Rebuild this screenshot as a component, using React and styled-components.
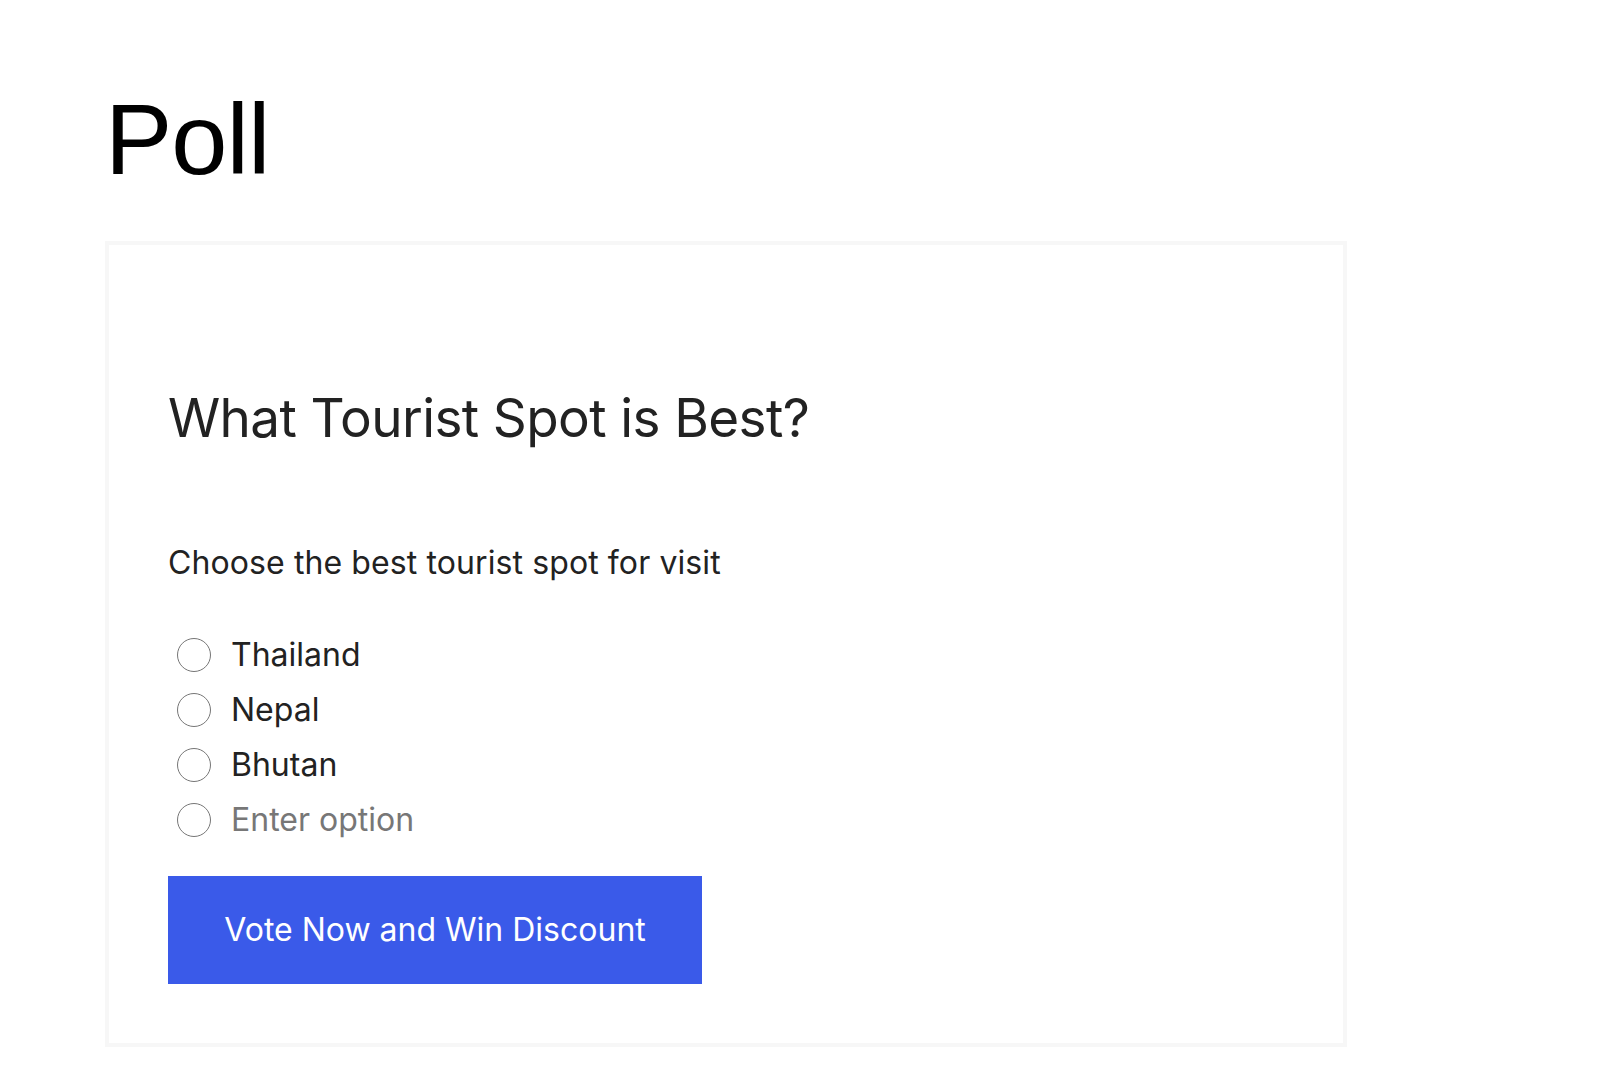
import React from 'react';
import styled, { createGlobalStyle } from 'styled-components';

const GlobalStyle = createGlobalStyle`
  html, body {
    margin: 0;
    padding: 0;
    background: #ffffff;
  }
`;

const Page = styled.div`
  padding: 89px 0 40px 105px;
  font-family: Inter, "Noto Sans", sans-serif;
  color: #222222;
`;

const PageTitle = styled.h1`
  margin: 0 0 51px 0;
  font-family: "Liberation Sans", Arial, sans-serif;
  font-weight: 400;
  font-size: 101px;
  line-height: 1;
  letter-spacing: -1px;
  color: #000000;
`;

const Card = styled.form`
  box-sizing: border-box;
  width: 1242px;
  height: 806px;
  border: 4px solid #f7f7f7;
  padding: 142px 60px 0 59px;
`;

const Question = styled.h2`
  margin: 0 0 93px 0;
  font-weight: 400;
  font-size: 53px;
  line-height: 1.2;
  letter-spacing: -0.6px;
  color: #222222;
`;

const Prompt = styled.p`
  margin: 0 0 55px 0;
  font-size: 32px;
  line-height: 1.2;
  letter-spacing: 0.1px;
  color: #222222;
`;

const Options = styled.div`
  display: flex;
  flex-direction: column;
  gap: 19px;
  margin-bottom: 38px;
`;

const Option = styled.label`
  display: flex;
  align-items: center;
  gap: 20px;
  padding-left: 9px;
  font-size: 32px;
  line-height: 36px;
  color: ${props => (props.placeholder ? '#777777' : '#222222')};
`;

const Radio = styled.span`
  box-sizing: border-box;
  width: 34px;
  height: 34px;
  border-radius: 50%;
  border: 1.5px solid #767676;
  flex-shrink: 0;
`;

const VoteButton = styled.button`
  box-sizing: border-box;
  width: 534px;
  height: 108px;
  border: none;
  background: #3a5ae9;
  color: #ffffff;
  font-family: Inter, "Noto Sans", sans-serif;
  font-size: 32px;
  cursor: pointer;
`;

const options = ['Thailand', 'Nepal', 'Bhutan'];

export default function App() {
  return (
    <>
      <GlobalStyle />
      <Page>
        <PageTitle>Poll</PageTitle>
        <Card onSubmit={e => e.preventDefault()}>
          <Question>What Tourist Spot is Best?</Question>
          <Prompt>Choose the best tourist spot for visit</Prompt>
          <Options>
            {options.map(name => (
              <Option key={name}>
                <Radio />
                {name}
              </Option>
            ))}
            <Option placeholder>
              <Radio />
              Enter option
            </Option>
          </Options>
          <VoteButton type="submit">Vote Now and Win Discount</VoteButton>
        </Card>
      </Page>
    </>
  );
}
